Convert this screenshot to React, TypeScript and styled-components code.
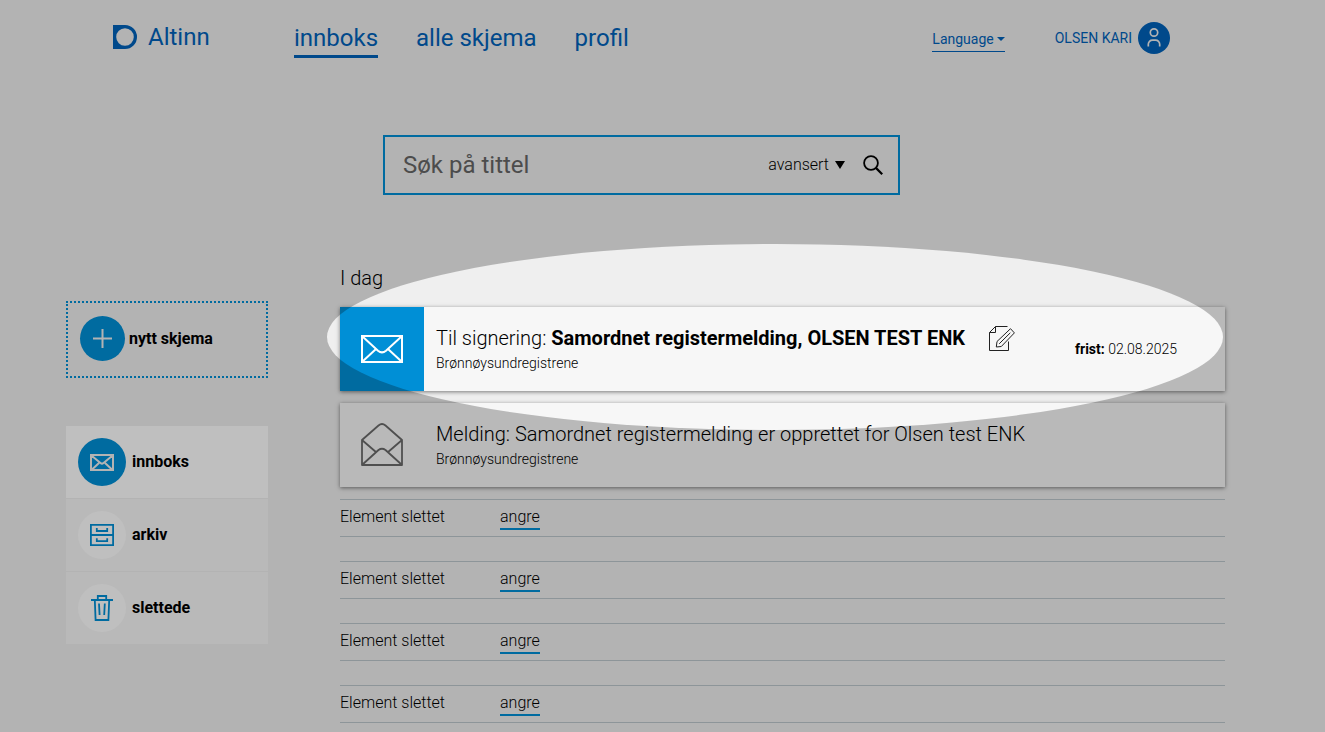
import React from "react";
import styled, { createGlobalStyle } from "styled-components";

const color = {
  page: "#efefef",
  card: "#f7f7f7",
  navy: "#0062ba",
  blue: "#008fd6",
  line: "#bcc7cc",
};

const GlobalStyle = createGlobalStyle`
  *, *::before, *::after { box-sizing: border-box; }
  body {
    margin: 0;
    background: ${color.page};
    color: #000;
    font-family: Roboto, "Liberation Sans", sans-serif;
    font-size: 16px;
    line-height: 24px;
  }
  button, input { font: inherit; color: inherit; }
  button { padding: 0; border: 0; background: none; cursor: pointer; }
  a { color: inherit; text-decoration: none; }
  b { font-weight: 700; }
  svg { display: block; flex: none; }
`;

const Page = styled.div`
  position: relative;
  overflow: hidden;
  min-height: 100vh;
`;

const Top = styled.div`
  padding: 0 155px 0 113px;
`;

const Header = styled.header`
  display: flex;
  align-items: flex-start;
  height: 135px;
  padding-top: 22px;
  color: ${color.navy};
`;

const Logo = styled.a`
  display: flex;
  align-items: center;
  gap: 11px;
  width: 181px;
  font-size: 24px;
  line-height: 30px;
`;

const Nav = styled.nav`
  display: flex;
  gap: 38px;
  font-size: 24px;
  line-height: 32px;
`;

const NavLink = styled.a<{ $active?: boolean }>`
  height: 36px;
  border-bottom: 3px solid ${(p) => (p.$active ? color.navy : "transparent")};
`;

const Account = styled.div`
  display: flex;
  align-items: center;
  gap: 50px;
  height: 32px;
  margin-left: auto;
  font-size: 14px;
`;

const Language = styled.button`
  display: flex;
  align-items: center;
  gap: 3px;
  margin-top: 2px;
  border-bottom: 1px solid ${color.navy};
`;

const Profile = styled.a`
  display: flex;
  align-items: center;
  gap: 6px;
`;

const Search = styled.form`
  display: flex;
  align-items: center;
  width: 517px;
  height: 60px;
  margin: 0 auto;
  padding: 0 15px 0 18px;
  border: 2px solid ${color.blue};
`;

const SearchInput = styled.input`
  flex: 1;
  min-width: 0;
  padding: 0;
  border: 0;
  outline: 0;
  background: none;
  font-size: 24px;
  &::placeholder { color: #666; opacity: 1; }
`;

const Advanced = styled.button`
  display: flex;
  align-items: center;
  gap: 6px;
  margin-right: 18px;
  font-weight: 300;
`;

const Body = styled.div`
  display: grid;
  grid-template-columns: 202px minmax(0, 1fr);
  column-gap: 72px;
  align-items: start;
  padding: 71px 100px 0 66px;
`;

const Sidebar = styled.aside`
  display: flex;
  flex-direction: column;
  gap: 48px;
  padding-top: 35px;
  font-weight: 700;
`;

const NewForm = styled.button`
  display: flex;
  align-items: center;
  gap: 4px;
  height: 77px;
  padding: 0 12px 2px;
  border: 2px dotted ${color.blue};
  font-weight: 700;
`;

const Menu = styled.nav`
  display: flex;
  flex-direction: column;
  gap: 1px;
`;

const MenuItem = styled.a<{ $active?: boolean }>`
  display: flex;
  align-items: center;
  gap: 6px;
  height: 72px;
  padding: 0 12px;
  background: ${(p) => (p.$active ? "#fff" : color.card)};
`;

const Disc = styled.span<{ $size: number; $filled?: boolean }>`
  display: flex;
  align-items: center;
  justify-content: center;
  width: ${(p) => p.$size}px;
  height: ${(p) => p.$size}px;
  border-radius: 50%;
  background: ${(p) => (p.$filled ? color.blue : "#fff")};
  color: ${(p) => (p.$filled ? "#fff" : color.blue)};
`;

const DayTitle = styled.h1`
  margin: 0 0 17px;
  font-size: 20px;
  line-height: 24px;
  font-weight: 300;
`;

const Messages = styled.div`
  display: flex;
  flex-direction: column;
  gap: 12px;
  margin-bottom: 12px;
`;

const Message = styled.article`
  position: relative;
  display: flex;
  height: 84px;
  background: ${color.card};
  box-shadow: 0 1px 4px rgba(0, 0, 0, 0.5);
`;

const MessageIcon = styled.div<{ $unread?: boolean }>`
  display: flex;
  align-items: center;
  justify-content: center;
  width: 84px;
  background: ${(p) => (p.$unread ? color.blue : "transparent")};
  color: ${(p) => (p.$unread ? "#fff" : "#6a6a6a")};
`;

const MessageText = styled.div`
  flex: 1;
  min-width: 0;
  padding: 18px 12px 0;
`;

const Title = styled.h2`
  display: flex;
  align-items: center;
  gap: 24px;
  margin: 0;
  font-size: 20px;
  line-height: 26px;
  font-weight: 300;
  white-space: nowrap;
`;

const Sender = styled.p`
  margin: 0;
  font-size: 14px;
  font-weight: 300;
`;

const Deadline = styled.p`
  align-self: center;
  margin: 0;
  padding-right: 48px;
  font-size: 14px;
  font-weight: 300;
`;

/* Dims everything outside an ellipse around the message it points at. */
const Spotlight = styled.div`
  position: absolute;
  z-index: 1;
  inset: -63px 2px -39px -13px;
  border-radius: 50%;
  box-shadow: 0 0 0 4000px rgba(0, 0, 0, 0.25);
  pointer-events: none;
`;

const DeletedList = styled.ul`
  display: flex;
  flex-direction: column;
  gap: 24px;
  margin: 0;
  padding: 0;
  list-style: none;
`;

const Deleted = styled.li`
  display: grid;
  grid-template-columns: 160px auto;
  align-items: start;
  justify-content: start;
  height: 38px;
  padding-top: 5px;
  border: solid ${color.line};
  border-width: 1px 0;
  font-weight: 300;
`;

const Undo = styled.button`
  height: 25px;
  border-bottom: 2px solid ${color.blue};
  font-weight: 300;
`;

const LogoMark = () => (
  <svg width="24" height="24" viewBox="0 0 24 24" aria-hidden="true">
    <path fill="currentColor" fillRule="evenodd" d="M0 0h12a12 12 0 0 1 0 24H0zM12 3.2a8.8 8.8 0 1 0 0 17.6a8.8 8.8 0 0 0 0-17.6z" />
  </svg>
);

const Caret = ({ width, height }: { width: number; height: number }) => (
  <svg width={width} height={height} viewBox="0 0 10 10" preserveAspectRatio="none" aria-hidden="true">
    <path fill="currentColor" d="M0 0h10L5 10z" />
  </svg>
);

const Avatar = () => (
  <svg width="32" height="32" viewBox="0 0 32 32" aria-hidden="true">
    <circle cx="16" cy="16" r="16" fill="currentColor" />
    <g fill="none" stroke={color.page} strokeWidth="1.7">
      <circle cx="16" cy="10.5" r="3.7" />
      <path d="M10.3 24.5v-2.2a4.2 4.2 0 0 1 4.2-4.2h3a4.2 4.2 0 0 1 4.2 4.2v2.2" />
    </g>
  </svg>
);

const Magnifier = () => (
  <svg width="20" height="20" viewBox="0 0 20 20" fill="none" stroke="currentColor" strokeWidth="1.8" aria-hidden="true">
    <circle cx="8" cy="8" r="6.9" />
    <path d="M12.9 12.9l6.3 6.3" strokeWidth="2.2" />
  </svg>
);

const Plus = () => (
  <svg width="19" height="19" viewBox="0 0 19 19" stroke={color.page} strokeWidth="2" aria-hidden="true">
    <path d="M9.5 0v19M0 9.5h19" />
  </svg>
);

const SmallEnvelope = () => (
  <svg width="24" height="17" viewBox="0 0 24 17" fill="none" stroke={color.page} strokeWidth="2" aria-hidden="true">
    <path d="M1 1h22v15H1zM2 2l8.5 7q1.5 1.2 3 0L22 2M2 15.5l7-6.5M22 15.5L15 9" />
  </svg>
);

const Drawers = () => (
  <svg width="24" height="22" viewBox="0 0 24 22" fill="none" stroke="currentColor" strokeWidth="1.8" aria-hidden="true">
    <path d="M.9.9h22.2v20.2H.9zM.9 11h22.2M6.8 4v3h10.4V4M6.8 14.2v3h10.4v-3" />
  </svg>
);

const Trash = () => (
  <svg width="22" height="26" viewBox="0 0 22 26" fill="none" stroke="currentColor" strokeWidth="1.8" aria-hidden="true">
    <path d="M0 5h22M6.8 5V1h8.4v4M3.8 5l.8 20h12.8l.8-20M8 8.5l.6 11.500M13.800 8.500L13.200 20" />
  </svg>
);

const Envelope = () => (
  <svg width="42" height="28" viewBox="0 0 42 28" fill="none" stroke="currentColor" strokeWidth="2" aria-hidden="true">
    <path d="M1 1h40v26H1zM1.5 1.5L17 15.7q4 3.4 8 0L40.5 1.5M1.5 26.5L15 14M40.5 26.5L27 14" />
  </svg>
);

const OpenEnvelope = () => (
  <svg width="42" height="44" viewBox="0 0 42 44" fill="none" stroke="currentColor" strokeWidth="1.8" strokeLinejoin="round" aria-hidden="true">
    <path d="M1 17v25h40V17L24.5 2.5Q21-.5 17.5 2.5zM1 17l14.5 12.5M41 17L26.5 29.5M1.5 41.5L17.5 27q3.5-2.5 7 0L40.5 41.5" />
  </svg>
);

const Sign = () => (
  <svg width="26" height="25" viewBox="0 0 26 25" fill="none" stroke="#222" strokeWidth="1" aria-hidden="true">
    <path d="M18.5 .5H6.5L.5 6.5v18h19V15.5M6.5 .5v6H.5" />
    <path d="M8 15.5L21.5 2.7l3.9 4.2L12.3 20.5l-5 .5zM10.2 17.8L21.3 6.8" />
  </svg>
);

const deletedRows = [1, 2, 3, 4];

export default function App() {
  return (
    <>
      <GlobalStyle />
      <Page>
        <Top>
          <Header>
            <Logo href="#">
              <LogoMark />
              Altinn
            </Logo>
            <Nav>
              <NavLink href="#innboks" $active>innboks</NavLink>
              <NavLink href="#skjema">alle skjema</NavLink>
              <NavLink href="#profil">profil</NavLink>
            </Nav>
            <Account>
              <Language type="button">
                Language <Caret width={8} height={4} />
              </Language>
              <Profile href="#konto">
                OLSEN KARI <Avatar />
              </Profile>
            </Account>
          </Header>
          <Search role="search">
            <SearchInput type="text" placeholder="Søk på tittel" aria-label="Søk på tittel" />
            <Advanced type="button">
              avansert <Caret width={10} height={8} />
            </Advanced>
            <button type="submit" aria-label="Søk">
              <Magnifier />
            </button>
          </Search>
        </Top>
        <Body>
          <Sidebar>
            <NewForm type="button">
              <Disc $size={45} $filled><Plus /></Disc>
              nytt skjema
            </NewForm>
            <Menu>
              <MenuItem href="#innboks" $active>
                <Disc $size={48} $filled><SmallEnvelope /></Disc>
                innboks
              </MenuItem>
              <MenuItem href="#arkiv">
                <Disc $size={48}><Drawers /></Disc>
                arkiv
              </MenuItem>
              <MenuItem href="#slettede">
                <Disc $size={48}><Trash /></Disc>
                slettede
              </MenuItem>
            </Menu>
          </Sidebar>
          <main>
            <DayTitle>I dag</DayTitle>
            <Messages>
              <Message>
                <MessageIcon $unread><Envelope /></MessageIcon>
                <MessageText>
                  <Title>
                    <span>Til signering: <b>Samordnet registermelding, OLSEN TEST ENK</b></span>
                    <Sign />
                  </Title>
                  <Sender>Brønnøysundregistrene</Sender>
                </MessageText>
                <Deadline><b>frist:</b> 02.08.2025</Deadline>
                <Spotlight />
              </Message>
              <Message>
                <MessageIcon><OpenEnvelope /></MessageIcon>
                <MessageText>
                  <Title>Melding: Samordnet registermelding er opprettet for Olsen test ENK</Title>
                  <Sender>Brønnøysundregistrene</Sender>
                </MessageText>
              </Message>
            </Messages>
            <DeletedList>
              {deletedRows.map((row) => (
                <Deleted key={row}>
                  <span>Element slettet</span>
                  <Undo type="button">angre</Undo>
                </Deleted>
              ))}
            </DeletedList>
          </main>
        </Body>
      </Page>
    </>
  );
}
